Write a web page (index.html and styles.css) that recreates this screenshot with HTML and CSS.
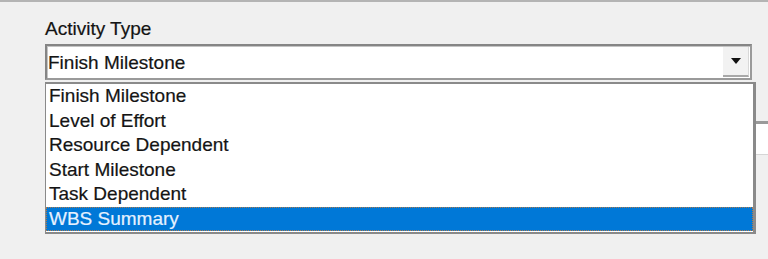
FILE: index.html
```html
<!DOCTYPE html>
<html>
<head>
<meta charset="utf-8">
<link rel="stylesheet" href="styles.css">
</head>
<body>
<div class="dialog">
  <div class="field-label">Activity Type</div>
  <div class="combo">
    <div class="combo-value">Finish Milestone</div>
    <div class="combo-button"><span class="arrow"></span></div>
  </div>
  <div class="under-field"></div>
  <ul class="dropdown">
    <li>Finish Milestone</li>
    <li>Level of Effort</li>
    <li>Resource Dependent</li>
    <li>Start Milestone</li>
    <li>Task Dependent</li>
    <li class="selected">WBS Summary</li>
  </ul>
</div>
</body>
</html>
```
FILE: styles.css
```css
html, body {
  margin: 0;
  padding: 0;
}
body {
  width: 768px;
  height: 259px;
  overflow: hidden;
  background: #f0f0f0;
  font-family: "Liberation Sans", Arial, sans-serif;
  font-size: 19px;
  color: #141414;
  -webkit-text-stroke: 0.2px;
}
.dialog {
  position: relative;
  height: 257px;
  border-top: 2px solid #b4b4b4;
  padding-left: 45px;
  box-sizing: border-box;
}
.field-label {
  padding-top: 16px;
  height: 26px;
  line-height: 22px;
}
.combo {
  display: flex;
  align-items: center;
  justify-content: space-between;
  width: 707px;
  height: 36px;
  box-sizing: border-box;
  background: #fff;
  border: 2px solid #858585;
  border-right-color: #9a9a9a;
  border-bottom-color: #9a9a9a;
  box-shadow: inset 1px 1px 0 #c4c4c4;
}
.combo-value {
  padding-left: 1px;
  padding-top: 1px;
}
.combo-button {
  width: 26px;
  height: 30px;
  margin-right: 1px;
  background: #f2f2f2;
  border-right: 1px solid #d8d8d8;
  border-bottom: 2px solid #a8a8a8;
  box-sizing: border-box;
  display: flex;
  align-items: center;
  justify-content: center;
}
.arrow {
  width: 0;
  height: 0;
  border-left: 5px solid transparent;
  border-right: 5px solid transparent;
  border-top: 6px solid #111;
}
.under-field {
  margin-top: 41px;
  width: 740px;
  height: 34px;
  background: #fff;
  border-top: 3px solid #9a9a9a;
  border-bottom: 1px solid #d6d6d6;
  box-sizing: border-box;
}
.dropdown {
  position: absolute;
  left: 45px;
  top: 80px;
  width: 711px;
  height: 152px;
  margin: 0;
  padding: 0;
  list-style: none;
  background: #fff;
  border: 2px solid #8a8a8a;
  border-left-width: 1px;
  border-right-width: 3px;
  box-sizing: border-box;
}
.dropdown li {
  height: 24.5px;
  line-height: 24px;
  padding-left: 3px;
  box-sizing: border-box;
}
.dropdown li.selected {
  background: #0078d7;
  color: #e6f1ff;
  outline: 1px dotted #b07a4a;
  outline-offset: -1px;
}
```
